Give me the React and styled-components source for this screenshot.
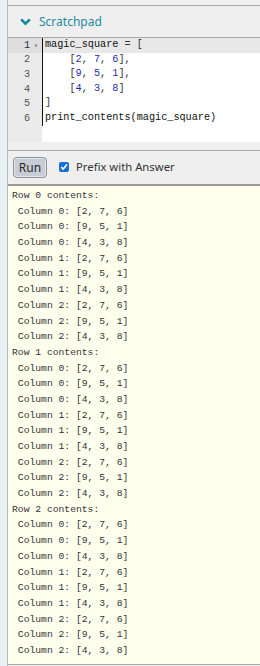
import React from "react";
import styled, { createGlobalStyle } from "styled-components";

const GlobalStyle = createGlobalStyle`
  html, body {
    margin: 0;
    padding: 0;
    background: #e8f1f5;
  }
  body {
    font-family: "Noto Sans", "Open Sans", sans-serif;
  }
`;

const codeLines = [
  [["magic_square ", "txt"], ["= [", "punc"]],
  [["    [", "punc"], ["2", "num"], [", ", "punc"], ["7", "num"], [", ", "punc"], ["6", "num"], ["],", "punc"]],
  [["    [", "punc"], ["9", "num"], [", ", "punc"], ["5", "num"], [", ", "punc"], ["1", "num"], ["],", "punc"]],
  [["    [", "punc"], ["4", "num"], [", ", "punc"], ["3", "num"], [", ", "punc"], ["8", "num"], ["]", "punc"]],
  [["]", "punc"]],
  [["print_contents(magic_square)", "txt"]],
];

const rows = ["[2, 7, 6]", "[9, 5, 1]", "[4, 3, 8]"];

function buildOutput() {
  const out = [];
  for (let r = 0; r < 3; r++) {
    out.push(`Row ${r} contents:`);
    for (let c = 0; c < 3; c++) {
      for (const row of rows) out.push(` Column ${c}: ${row}`);
    }
  }
  return out;
}

export default function App() {
  const output = buildOutput();
  return (
    <>
      <GlobalStyle />
      <Page>
        <Strip />
        <Panel>
          <TopGap />
          <Header>
            <Chevron width="11" height="8" viewBox="0 0 11 8">
              <path d="M1.2 1.4 L5.5 5.7 L9.8 1.4" fill="none" stroke="#17899e" strokeWidth="2.6" />
            </Chevron>
            <Title>Scratchpad</Title>
          </Header>
          <Editor>
            <Gutter>
              {codeLines.map((_, i) => (
                <GutterLine key={i} $active={i === 0}>
                  <LineNo $active={i === 0}>{i + 1}</LineNo>
                  <Fold>{i === 0 ? "▾" : ""}</Fold>
                </GutterLine>
              ))}
            </Gutter>
            <Code>
              <CodeLines>
                {codeLines.map((line, i) => (
                  <CodeLine key={i} $active={i === 0}>
                    {line.map(([t, k], j) => (
                      <Tok key={j} $kind={k}>{t}</Tok>
                    ))}
                  </CodeLine>
                ))}
              </CodeLines>
            </Code>
          </Editor>
          <Spacer />
          <Controls>
            <RunButton>Run</RunButton>
            <Check>
              <svg width="8" height="8" viewBox="0 0 8 8">
                <path d="M1.2 4.2 L3.2 6.1 L6.9 1.6" fill="none" stroke="#fff" strokeWidth="1.6" />
              </svg>
            </Check>
            <Label>Prefix with Answer</Label>
          </Controls>
          <Output>
            {output.map((l, i) => (
              <OutLine key={i}>{l}</OutLine>
            ))}
          </Output>
        </Panel>
      </Page>
    </>
  );
}

const Page = styled.div`
  display: flex;
  width: 260px;
  height: 666px;
  overflow: hidden;
`;

const Strip = styled.div`
  width: 7px;
  flex: none;
  background: #e8f1f5;
`;

const Panel = styled.div`
  flex: 1;
  display: flex;
  flex-direction: column;
  background: #efefef;
  border-left: 1px solid #b9b9b9;
  min-width: 0;
`;

const TopGap = styled.div`
  height: 5px;
  border-bottom: 1px solid #a9a9a9;
`;

const Header = styled.div`
  height: 31px;
  display: flex;
  align-items: center;
  padding-left: 12px;
  gap: 8px;
  border-bottom: 1px solid #a9a9a9;
`;

const Chevron = styled.svg`
  display: block;
  margin-top: 1px;
`;

const Title = styled.span`
  color: #1d8ba0;
  font-size: 12px;
`;

const Editor = styled.div`
  display: flex;
  height: 104px;
  background: #fff;
  font-family: "Liberation Mono", monospace;
  font-size: 10.2px;
`;

const Gutter = styled.div`
  width: 34px;
  flex: none;
  background: #ebebeb;
`;

const GutterLine = styled.div`
  height: 14.6px;
  display: flex;
  align-items: center;
  background: ${(p) => (p.$active ? "#dedede" : "transparent")};
`;

const LineNo = styled.span`
  width: 22px;
  text-align: right;
  color: ${(p) => (p.$active ? "#1b2a55" : "#555")};
`;

const Fold = styled.span`
  width: 12px;
  text-align: center;
  color: #8a8a8a;
  font-size: 8px;
`;

const Code = styled.div`
  flex: 1;
  min-width: 0;
`;

const CodeLines = styled.div`
  border-left: 1px solid #111;
`;

const CodeLine = styled.div`
  height: 14.6px;
  line-height: 14.6px;
  padding-left: 2px;
  white-space: pre;
  background: ${(p) => (p.$active ? "#e8e8e8" : "transparent")};
`;

const Tok = styled.span`
  color: ${(p) => (p.$kind === "num" ? "#1a2fb0" : p.$kind === "punc" ? "#333" : "#111")};
`;

const Spacer = styled.div`
  height: 8px;
  border-bottom: 1px solid #a9a9a9;
`;

const Controls = styled.div`
  height: 33px;
  display: flex;
  align-items: center;
  padding-left: 5px;
`;

const RunButton = styled.button`
  width: 34px;
  height: 21px;
  padding: 0;
  border: 1px solid #8d949c;
  border-radius: 4px;
  background: #c6cdd5;
  box-shadow: inset 0 0 0 1px #e3e7eb;
  font-family: "Noto Sans", sans-serif;
  font-size: 12px;
  color: #2a2a2a;
  display: flex;
  align-items: center;
  justify-content: center;
`;

const Check = styled.span`
  width: 10px;
  height: 10px;
  margin-left: 12px;
  border-radius: 2px;
  background: #1a6fd8;
  display: flex;
  align-items: center;
  justify-content: center;
  margin-top: -2px;
`;

const Label = styled.span`
  margin-left: 7px;
  font-size: 11.3px;
  color: #333;
  margin-top: -3px;
`;

const Output = styled.div`
  flex: 1;
  background: #ffffee;
  border-top: 2px solid #9a9a9a;
  border-bottom: 1px solid #a9a9a9;
  padding: 2px 0 0 4px;
  font-family: "Liberation Mono", monospace;
  font-size: 9.7px;
  color: #333;
  margin-bottom: 1px;
`;

const OutLine = styled.div`
  height: 15.7px;
  line-height: 15.7px;
  white-space: pre;
`;
